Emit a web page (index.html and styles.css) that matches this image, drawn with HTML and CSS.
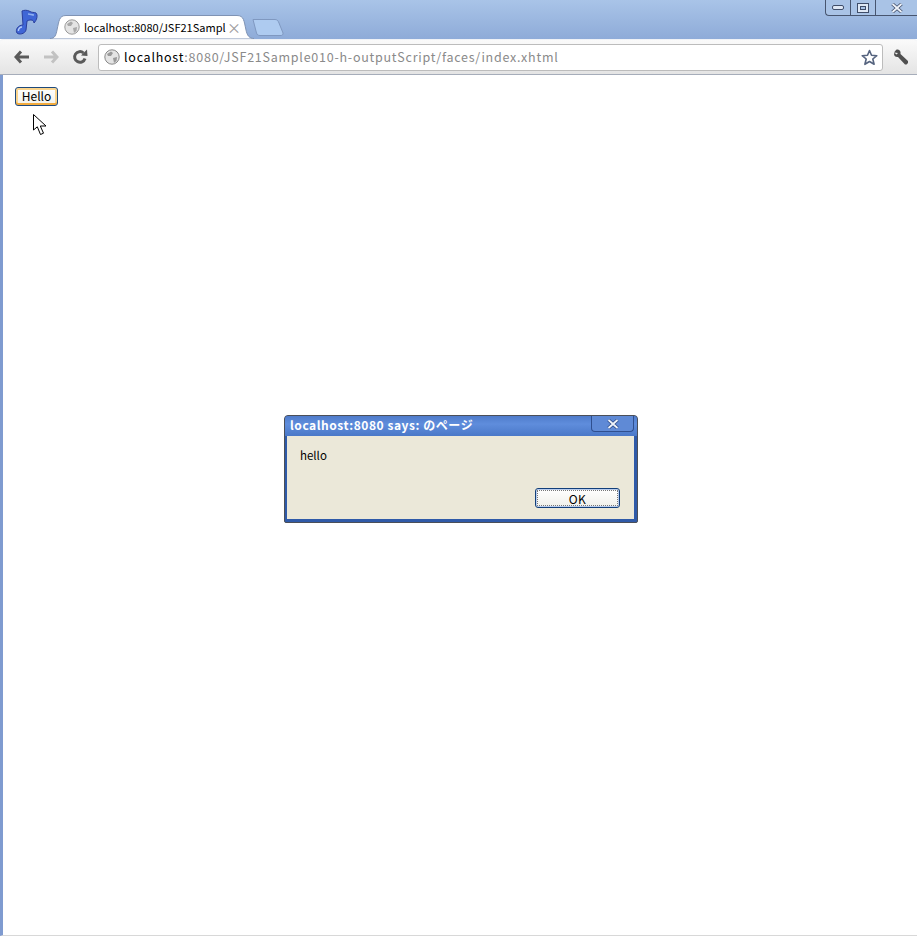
FILE: index.html
```html
<!DOCTYPE html>
<html lang="en">
  <head>
    <meta charset="UTF-8" />
    <meta name="viewport" content="width=device-width, initial-scale=1.0" />
    <title>localhost:8080/JSF21Sample010-h-outputScript</title>
    <link rel="stylesheet" href="styles.css">
  </head>
  <body>
    <div class="window">
      <div class="tab-strip">
        <svg class="app-icon" width="26" height="28" viewBox="0 0 26 28">
          <path d="M8 2 C10 1 13 1 15 2 C18 4 20 3 22 4 C24 6 23 11 20 14 C20 11 17 10 13 12 L12 21 C11 25 5 26 3 24 C1 21 4 16 9 16 Z" fill="#3f66d6" stroke="#2a3f9c"/>
          <path d="M4.500 22 C4 20 6 18 8 18" fill="none" stroke="#b4ccf8" stroke-width="1.500"/>
          <path d="M14 5 C16 5 18 6 20 6" fill="none" stroke="#8fb0f0" stroke-width="1.500"/>
        </svg>
        <div class="tab">
          <svg class="tab-shape" width="204" height="24" viewBox="0 0 204 24">
            <path d="M0 23.500 C5 23.500 6 20 7 15 C9 6 9 .5 16 .5 L187 .5 C194 .5 194 6 196 15 C197 20 199 23.500 204 23.500 L204 24 L0 24 Z" fill="#fff" stroke="#7f93b4"/>
          </svg>
          <svg class="globe" width="16" height="16" viewBox="0 0 16 16">
            <circle cx="8" cy="8" r="7.2" fill="#e4e4e4" stroke="#999"/>
            <path d="M3 5 L7 2.500 L9 4 L7 7 L4 7 Z M9 9 L13 8 L12.500 12 L10 14 Z" fill="#a8a8a8"/>
          </svg>
          <span class="tab-title">localhost:8080/JSF21Sampl</span>
          <span class="tab-close">×</span>
        </div>
        <svg class="new-tab" width="32" height="17" viewBox="0 0 32 17">
          <path d="M1 .5 L23 .5 C25 .5 26 1.500 27 4 L31 14 C31.500 15.500 30 16.500 29 16.500 L8 16.500 C6 16.500 5 15.500 4.500 14 Z" fill="#aecbf0" stroke="#7f98c0"/>
        </svg>
        <div class="window-controls">
          <div class="control">
            <svg width="12" height="6" viewBox="0 0 12 6"><rect x=".5" y=".5" width="11" height="4" rx="1.500" fill="#dfe8f5" stroke="#3f4d69"/></svg>
          </div>
          <div class="control">
            <svg width="12" height="10" viewBox="0 0 12 10"><rect x=".5" y=".5" width="11" height="9" fill="#dfe8f5" stroke="#3f4d69"/><rect x="3.500" y="3.500" width="5" height="3" fill="#a9c3e6" stroke="#3f4d69"/></svg>
          </div>
          <div class="control control-close">
            <svg width="12" height="10" viewBox="0 0 12 10"><path d="M1.500 1 L10.500 9 M10.500 1 L1.500 9" stroke="#3f4d69" stroke-width="3.400"/><path d="M1.500 1 L10.500 9 M10.500 1 L1.500 9" stroke="#eef3fa" stroke-width="1.800"/></svg>
          </div>
        </div>
      </div>

      <div class="toolbar">
        <svg class="tool-icon" width="16" height="14" viewBox="0 0 16 14"><path d="M7 1.500 L2 7 L7 12.500 M2.500 7 L15 7" fill="none" stroke="#5a5a5a" stroke-width="3"/></svg>
        <svg class="tool-icon" width="16" height="14" viewBox="0 0 16 14"><path d="M9 1.500 L14 7 L9 12.500 M13.500 7 L1 7" fill="none" stroke="#c2c2c2" stroke-width="3"/></svg>
        <svg class="tool-icon" width="16" height="16" viewBox="0 0 16 16"><path d="M13 9.500 A5.300 5.300 0 1 1 11.500 4" fill="none" stroke="#5a5a5a" stroke-width="3"/><path d="M9 6.500 L15.500 7 L15 .5 Z" fill="#5a5a5a"/></svg>
        <div class="omnibox">
          <svg class="globe" width="16" height="16" viewBox="0 0 16 16">
            <circle cx="8" cy="8" r="7.2" fill="#e4e4e4" stroke="#888"/>
            <path d="M3 5 L7 2.500 L9 4 L7 7 L4 7 Z M9 9 L13 8 L12.500 12 L10 14 Z" fill="#999"/>
          </svg>
          <span class="url"><span class="url-host">localhost</span>:8080/JSF21Sample010-h-outputScript/faces/index.xhtml</span>
          <svg class="star" width="17" height="17" viewBox="0 0 17 17"><path d="M8.500 1.500 L10.500 6.300 L15.800 6.700 L11.800 10 L13.100 15.300 L8.500 12.500 L3.900 15.300 L5.200 10 L1.200 6.700 L6.500 6.300 Z" fill="#fff" stroke="#56647f" stroke-width="1.600" stroke-linejoin="round"/></svg>
        </div>
        <svg class="wrench" width="16" height="16" viewBox="0 0 16 16"><path d="M1 3.500 L3 1 C5 0 7 1 7.500 3 L7.500 5 L15 12 L15 14 L13.500 15.500 L12 15.500 L5 8 C3 8.500 1 7 1 5 L1.500 3.800 L3.500 5.500 L5 4 Z" fill="#4f4f4f"/></svg>
      </div>

      <div class="page">
        <button class="hello-btn">Hello</button>
        <svg class="cursor" width="15" height="22" viewBox="0 0 15 22"><path d="M.5 .5 L.5 16 L4.300 12.800 L7.500 20.500 L10.500 19.200 L7.300 12 L13 12 Z" fill="#fff" stroke="#000"/></svg>
      </div>
    </div>

    <div class="dialog">
      <div class="dialog-title">
        <span class="dialog-caption">localhost:8080 says: のページ</span>
        <div class="dialog-close">
          <svg width="12" height="10" viewBox="0 0 12 10"><path d="M1.500 1 L10.500 9 M10.500 1 L1.500 9" stroke="#2c4a86" stroke-width="3.400"/><path d="M1.500 1 L10.500 9 M10.500 1 L1.500 9" stroke="#eef3fa" stroke-width="1.800"/></svg>
        </div>
      </div>
      <div class="dialog-body">
        <p class="dialog-message">hello</p>
        <div class="dialog-actions">
          <button class="ok-btn">OK</button>
        </div>
      </div>
    </div>
  </body>
</html>
```

FILE: styles.css
```css
html,
body {
  margin: 0;
  padding: 0;
  height: 100%;
}

body {
  font-family: "Noto Sans CJK JP", "Liberation Sans", sans-serif;
  background-color: #fff;
  overflow: hidden;
}

.window {
  display: flex;
  flex-direction: column;
  height: 936px;
}

.tab-strip {
  display: flex;
  align-items: flex-start;
  height: 39px;
  flex-shrink: 0;
  background: linear-gradient(#a9c4e8, #8eabd8);
}

.app-icon {
  margin: 9px 0 0 14px;
  flex-shrink: 0;
}

.tab {
  position: relative;
  display: flex;
  align-items: center;
  width: 204px;
  height: 24px;
  margin: 15px 0 0 10px;
  flex-shrink: 0;
}

.tab-shape {
  position: absolute;
  left: 0;
  top: 0;
}

.tab .globe {
  position: relative;
  margin-left: 14px;
}

.tab-title {
  position: relative;
  margin-left: 4px;
  width: 142px;
  white-space: nowrap;
  font-size: 11px;
  line-height: 24px;
  color: #000;
}

.tab-close {
  position: relative;
  margin-left: 1px;
  font-size: 14px;
  line-height: 24px;
  color: #9a9a9a;
}

.new-tab {
  margin: 19px 0 0 -2px;
  flex-shrink: 0;
}

.window-controls {
  display: flex;
  margin-left: auto;
  height: 15px;
  border: 1px solid #47556f;
  border-top: none;
  border-right: none;
  border-bottom-left-radius: 4px;
  background: #a9c3e6;
}

.control {
  display: flex;
  align-items: center;
  justify-content: center;
  width: 24px;
  border-right: 1px solid #47556f;
}

.control-close {
  width: 41px;
  border-right: none;
}

.toolbar {
  display: flex;
  align-items: center;
  height: 34px;
  padding-left: 14px;
  flex-shrink: 0;
  background: linear-gradient(#fafafa, #e4e4e4);
  border-top: 1px solid #eef1f6;
  border-bottom: 1px solid #a6adba;
  border-radius: 3px 3px 0 0;
}

.tool-icon {
  margin-right: 13px;
  flex-shrink: 0;
}

.omnibox {
  display: flex;
  align-items: center;
  width: 785px;
  height: 27px;
  margin-left: -3px;
  padding: 0 4px 0 5px;
  box-sizing: border-box;
  background: #fff;
  border: 1px solid #bcbcbc;
  border-radius: 3px;
  flex-shrink: 0;
}

.url {
  margin-left: 4px;
  padding-bottom: 2px;
  flex: 1;
  font-size: 12.500px;
  letter-spacing: .75px;
  white-space: nowrap;
  color: #8a8a8a;
}

.url-host {
  color: #000;
}

.star {
  flex-shrink: 0;
}

.wrench {
  margin-left: 10px;
  flex-shrink: 0;
}

.page {
  position: relative;
  flex: 1;
  padding: 12px 0 0 12px;
  border-left: 3px solid #7f9bd0;
  border-bottom: 1px solid #d8d8d8;
  background: #fff;
}

.hello-btn {
  display: block;
  width: 43px;
  height: 19px;
  padding: 0 0 2px;
  font-family: inherit;
  font-size: 12px;
  line-height: 15px;
  color: #000;
  background: linear-gradient(#fff, #f2f1ea);
  border: 1px solid #1f4a7c;
  border-radius: 3px;
  box-shadow: inset 0 -2px 0 #f3ab3c, inset 0 0 0 2px #fbd58d;
}

.cursor {
  position: absolute;
  left: 30px;
  top: 39px;
}

.dialog {
  position: absolute;
  left: 284px;
  top: 415px;
  width: 354px;
  height: 108px;
  display: flex;
  flex-direction: column;
  box-sizing: border-box;
  background: #2f5aa8;
  border: 1px solid #4b4f58;
  border-radius: 4px 4px 2px 2px;
  padding: 0 3px 3px 2px;
}

.dialog-title {
  display: flex;
  align-items: flex-start;
  height: 20px;
  margin: 0 -3px 0 -2px;
  padding: 0 3px 0 5px;
  flex-shrink: 0;
  border-radius: 3px 3px 0 0;
  background: linear-gradient(#4f7ccb, #5f8ddc 40%, #4a78c8);
}

.dialog-caption {
  font-size: 12px;
  line-height: 17px;
  font-weight: 700;
  letter-spacing: .55px;
  color: #fff;
  white-space: nowrap;
}

.dialog-close {
  display: flex;
  align-items: center;
  justify-content: center;
  margin-left: auto;
  width: 41px;
  height: 15px;
  border: 1px solid #2f4f8f;
  border-top: none;
  border-radius: 0 0 4px 4px;
  background: #5f8ad6;
}

.dialog-body {
  flex: 1;
  display: flex;
  flex-direction: column;
  background: #ebe8d9;
  padding: 12px 14px 11px 13px;
}

.dialog-message {
  margin: 0;
  font-size: 11.500px;
  line-height: 15px;
  color: #000;
}

.dialog-actions {
  display: flex;
  justify-content: flex-end;
  margin-top: auto;
}

.ok-btn {
  width: 85px;
  height: 20px;
  padding: 0;
  font-family: inherit;
  font-size: 12px;
  letter-spacing: .5px;
  color: #000;
  background: linear-gradient(#fff, #f0f0ea);
  border: 1px solid #123f7a;
  border-radius: 3px;
  box-shadow: inset 0 0 0 1px #b9cdee;
  outline: 1px dotted #777;
  outline-offset: -3px;
}
```
